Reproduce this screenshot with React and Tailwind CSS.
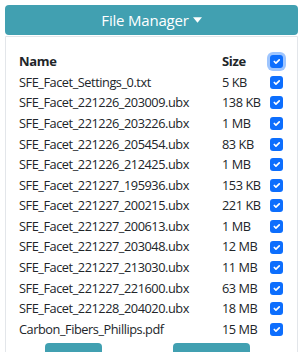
const files = [
  { name: "SFE_Facet_Settings_0.txt", size: "5 KB" },
  { name: "SFE_Facet_221226_203009.ubx", size: "138 KB" },
  { name: "SFE_Facet_221226_203226.ubx", size: "1 MB" },
  { name: "SFE_Facet_221226_205454.ubx", size: "83 KB" },
  { name: "SFE_Facet_221226_212425.ubx", size: "1 MB" },
  { name: "SFE_Facet_221227_195936.ubx", size: "153 KB" },
  { name: "SFE_Facet_221227_200215.ubx", size: "221 KB" },
  { name: "SFE_Facet_221227_200613.ubx", size: "1 MB" },
  { name: "SFE_Facet_221227_203048.ubx", size: "12 MB" },
  { name: "SFE_Facet_221227_213030.ubx", size: "11 MB" },
  { name: "SFE_Facet_221227_221600.ubx", size: "63 MB" },
  { name: "SFE_Facet_221228_204020.ubx", size: "18 MB" },
  { name: "Carbon_Fibers_Phillips.pdf", size: "15 MB" },
]

const Check = ({ focus }) => (
  <span
    className={`w-[13px] h-[13px] rounded-[3px] bg-[#0d6efd] flex items-center justify-center ${
      focus ? "ring-[3px] ring-[#9ec5fe]" : ""
    }`}
  >
    <svg viewBox="0 0 20 20" className="w-[11px] h-[11px]">
      <path d="M6 10l3 3l6-6" fill="none" stroke="white" strokeWidth="3" strokeLinecap="round" strokeLinejoin="round" />
    </svg>
  </span>
)

export default function App() {
  return (
    <div className="w-[303px] h-[352px] overflow-hidden bg-white p-[5px] text-[#212529]" style={{ fontFamily: "'Open Sans', sans-serif" }}>
      <div className="h-[30px] rounded-[4px] bg-[#41a0b1] flex items-center justify-center text-white text-[15px] tracking-[-0.2px]">
        <span>File Manager</span>
        <svg viewBox="0 0 10 6" className="w-[9px] h-[6px] ml-[4px]">
          <path d="M0 0h10L5 6z" fill="white" />
        </svg>
      </div>
      <div className="mt-[1px] border border-[#e3e6ea] rounded-b-[4px] pl-[13px] pr-[14px] pt-[14px] pb-[3px]">
        <div className="flex items-center h-[21px] text-[13px] font-bold tracking-[-0.3px]">
          <span className="flex-1">Name</span>
          <span className="w-[48px]">Size</span>
          <Check focus />
        </div>
        {files.map((f) => (
          <div key={f.name} className="flex items-center h-[20.6px] text-[12.75px] tracking-[-0.45px]">
            <span className="flex-1 whitespace-nowrap">{f.name}</span>
            <span className="w-[48px] whitespace-nowrap">{f.size}</span>
            <Check />
          </div>
        ))}
        <div className="flex mt-[3px] gap-[71px] pl-[26px]">
          <div className="w-[57px] h-[30px] rounded-[4px] bg-[#41a0b1]" />
          <div className="w-[77px] h-[30px] rounded-[4px] bg-[#41a0b1]" />
        </div>
      </div>
    </div>
  )
}
